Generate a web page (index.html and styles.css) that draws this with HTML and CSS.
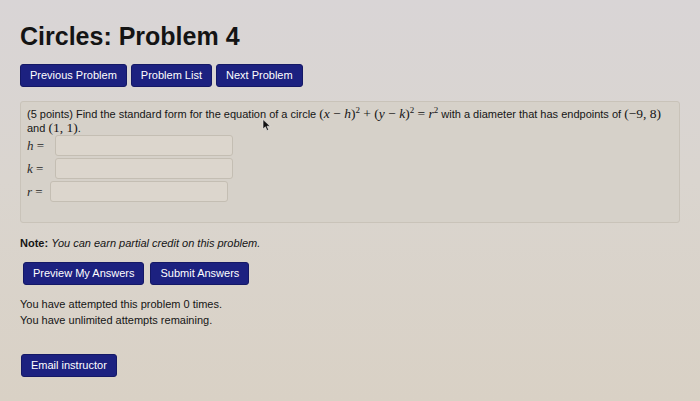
FILE: index.html
```html
<!DOCTYPE html>
<html>
<head>
<meta charset="utf-8">
<link rel="stylesheet" href="styles.css">
</head>
<body>
<div class="page">
  <h1 class="title">Circles: Problem 4</h1>
  <div class="nav">
    <button class="btn">Previous Problem</button>
    <button class="btn">Problem List</button>
    <button class="btn">Next Problem</button>
  </div>
  <div class="problem">
    <p class="statement">(5 points) Find the standard form for the equation of a circle <span class="math">(<i>x</i> − <i>h</i>)<sup>2</sup> + (<i>y</i> − <i>k</i>)<sup>2</sup> = <i>r</i><sup>2</sup></span> with a diameter that has endpoints of <span class="math">(−9, 8)</span> and <span class="math">(1, 1)</span>.</p>
    <div class="answers">
      <div class="row"><span class="var"><i>h</i> =</span><span class="field"></span></div>
      <div class="row"><span class="var"><i>k</i> =</span><span class="field"></span></div>
      <div class="row"><span class="var var-r"><i>r</i> =</span><span class="field"></span></div>
    </div>
    <svg class="cursor" width="9" height="12" viewBox="0 0 9 12"><path d="M1 0.5 L1 10 L3.4 7.8 L5 11.5 L6.6 10.8 L5 7.2 L8.2 7.2 Z" fill="#111" stroke="#eee" stroke-width="0.6"/></svg>
  </div>
  <p class="note"><b>Note:</b> <i>You can earn partial credit on this problem.</i></p>
  <div class="submit">
    <button class="btn">Preview My Answers</button>
    <button class="btn">Submit Answers</button>
  </div>
  <div class="attempts">
    <p>You have attempted this problem 0 times.</p>
    <p>You have unlimited attempts remaining.</p>
  </div>
  <button class="btn email">Email instructor</button>
</div>
</body>
</html>
```
FILE: styles.css
```css
html, body {
  margin: 0;
  padding: 0;
}
body {
  width: 700px;
  height: 401px;
  overflow: hidden;
  background: linear-gradient(180deg, #d9d5d6 0%, #dad5cf 45%, #d9d1c5 100%);
  font-family: "Liberation Sans", Arial, sans-serif;
  color: #151515;
}
.page {
  padding: 22px 20px 0 20px;
  display: flex;
  flex-direction: column;
  align-items: flex-start;
}
.title {
  margin: 0;
  font-size: 25px;
  line-height: 29px;
  font-weight: bold;
  color: #141414;
}
.nav {
  display: flex;
  gap: 4px;
  margin-top: 13px;
}
.btn {
  font-family: "Liberation Sans", Arial, sans-serif;
  font-size: 11px;
  color: #ffffff;
  background: #1c2180;
  border: 1px solid #141866;
  border-radius: 3px;
  height: 23px;
  padding: 0 9px;
  line-height: 21px;
}
.problem {
  position: relative;
  margin-top: 14px;
  width: 660px;
  height: 122px;
  box-sizing: border-box;
  background: #d6d1c9;
  border: 1px solid #c9c3b9;
  border-radius: 3px;
  padding: 5px 6px;
}
.cursor {
  position: absolute;
  left: 241px;
  top: 17px;
}
.statement {
  margin: 0;
  font-size: 11px;
  line-height: 13px;
  color: #151515;
}
.math {
  font-family: "Liberation Serif", "Times New Roman", serif;
  font-size: 13.5px;
}
.math sup {
  font-size: 9px;
  line-height: 0;
}
.answers {
  margin-top: 0;
  display: flex;
  flex-direction: column;
  gap: 2px;
}
.row {
  display: flex;
  align-items: center;
}
.var {
  font-family: "Liberation Serif", "Times New Roman", serif;
  font-size: 13px;
  width: 28px;
  color: #2a2a2a;
}
.var-r {
  width: 23px;
}
.field {
  display: block;
  width: 178px;
  height: 21px;
  box-sizing: border-box;
  background: #dcd6cd;
  border: 1px solid #c4beb3;
  border-radius: 3px;
}
.note {
  margin: 14px 0 0 0;
  font-size: 11px;
  line-height: 13px;
}
.submit {
  display: flex;
  gap: 6px;
  margin-top: 12px;
  margin-left: 3px;
}
.attempts {
  margin-top: 11px;
  font-size: 11px;
  line-height: 16px;
}
.attempts p {
  margin: 0;
}
.email {
  margin-top: 26px;
  margin-left: 1px;
}
```
